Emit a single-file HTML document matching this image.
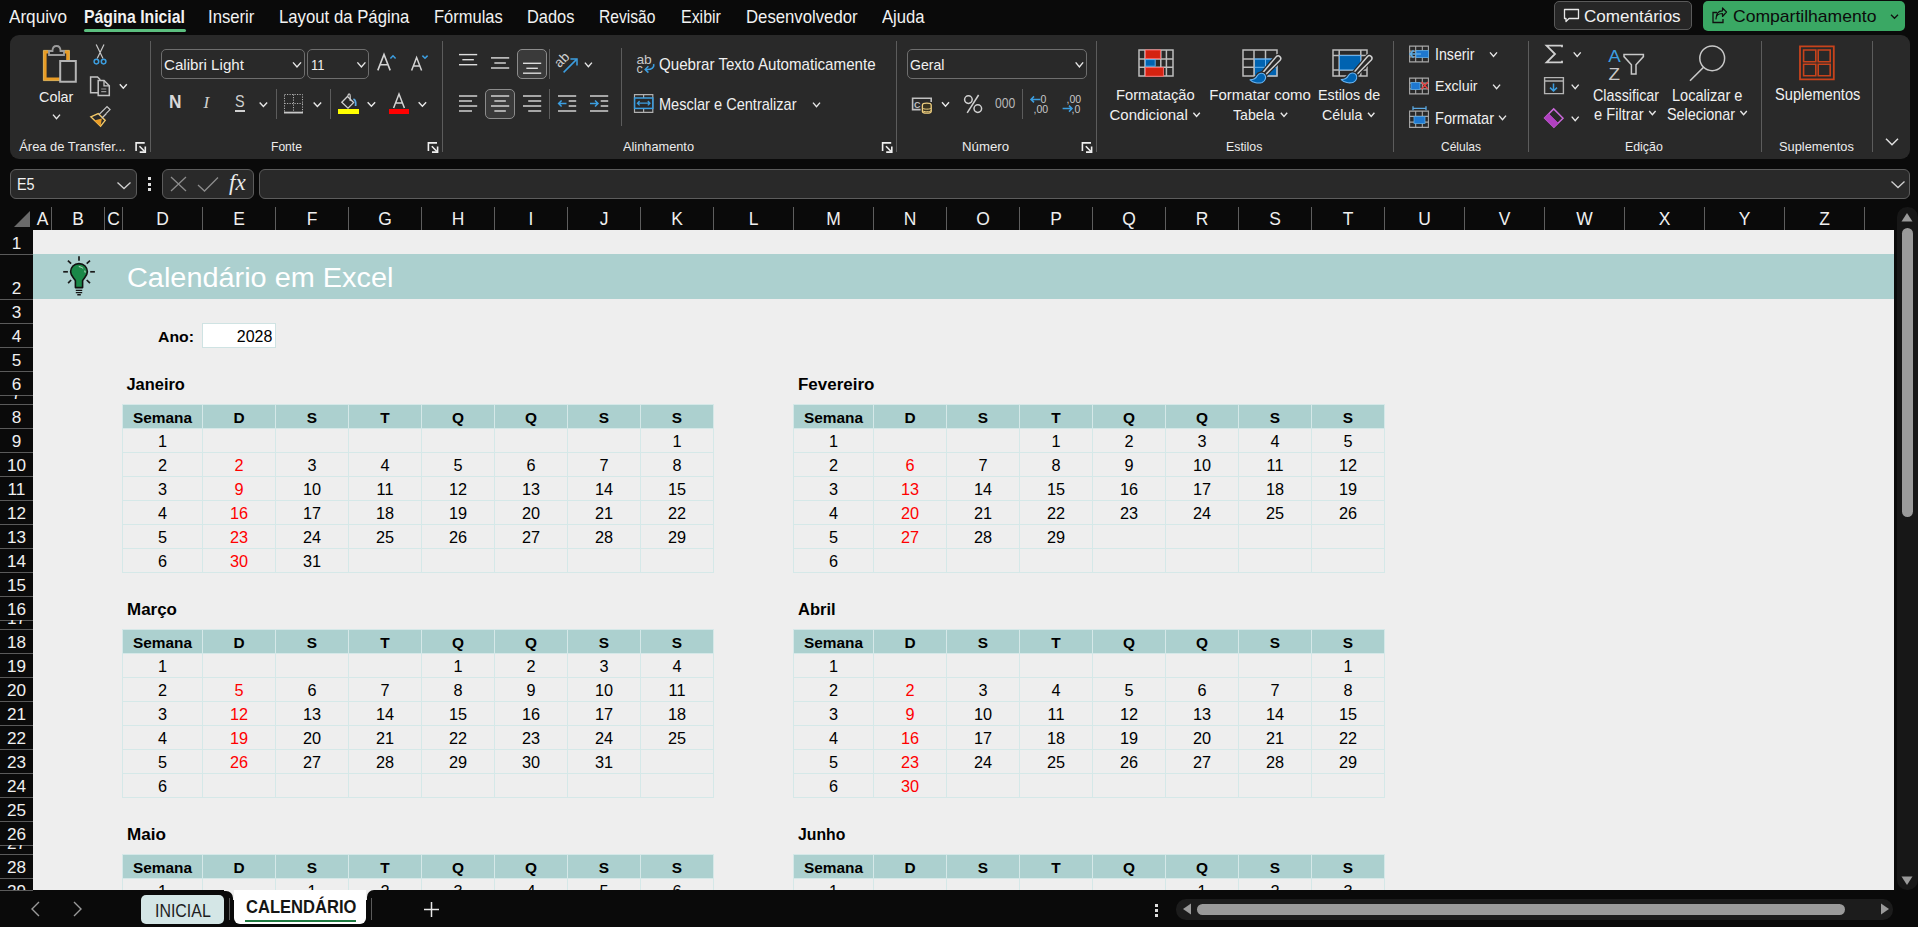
<!DOCTYPE html>
<html><head><meta charset="utf-8"><style>
html,body{margin:0;padding:0;}
body{width:1918px;height:927px;overflow:hidden;background:#0a0a0a;position:relative;font-family:"Liberation Sans",sans-serif;}
body>div{position:absolute;}
.t{position:absolute;white-space:nowrap;line-height:1;}
</style></head><body>
<div style="left:33px;top:230px;width:1861px;height:660px;background:#eeeeee;"></div>
<div class="t" style="left:9.40px;top:7.72px;font-size:18.17px;color:#f2f2f2;transform:scaleX(0.9431);transform-origin:0 0;">Arquivo</div>
<div class="t" style="left:83.80px;top:7.72px;font-size:18.17px;color:#f2f2f2;font-weight:bold;transform:scaleX(0.8698);transform-origin:0 0;">Página Inicial</div>
<div class="t" style="left:208.30px;top:7.72px;font-size:18.17px;color:#f2f2f2;transform:scaleX(0.9192);transform-origin:0 0;">Inserir</div>
<div class="t" style="left:279.00px;top:7.72px;font-size:18.17px;color:#f2f2f2;transform:scaleX(0.9220);transform-origin:0 0;">Layout da Página</div>
<div class="t" style="left:434.20px;top:7.72px;font-size:18.17px;color:#f2f2f2;transform:scaleX(0.9086);transform-origin:0 0;">Fórmulas</div>
<div class="t" style="left:527.20px;top:7.72px;font-size:18.17px;color:#f2f2f2;transform:scaleX(0.9044);transform-origin:0 0;">Dados</div>
<div class="t" style="left:599.30px;top:7.72px;font-size:18.17px;color:#f2f2f2;transform:scaleX(0.8607);transform-origin:0 0;">Revisão</div>
<div class="t" style="left:680.50px;top:7.72px;font-size:18.17px;color:#f2f2f2;transform:scaleX(0.8782);transform-origin:0 0;">Exibir</div>
<div class="t" style="left:746.20px;top:7.72px;font-size:18.17px;color:#f2f2f2;transform:scaleX(0.9216);transform-origin:0 0;">Desenvolvedor</div>
<div class="t" style="left:882.40px;top:7.72px;font-size:18.17px;color:#f2f2f2;transform:scaleX(0.9167);transform-origin:0 0;">Ajuda</div>
<div style="left:84px;top:29px;width:102px;height:3px;background:#5cbf7f;border-radius:2px;"></div>
<div style="left:1554px;top:1px;width:138px;height:29px;background:#262626;border:1px solid #5a5a5a;border-radius:5px;box-sizing:border-box;"></div>
<svg style="position:absolute;left:1563px;top:8px;" width="17" height="15" viewBox="0 0 17 15"><path d="M1.5 1.5 H15.5 V10.5 H6 L3 13.5 V10.5 H1.5 Z" fill="none" stroke="#e8e8e8" stroke-width="1.3" stroke-linejoin="round"/></svg>
<div class="t" style="left:1584.30px;top:7.68px;font-size:17.15px;color:#f2f2f2;transform:scaleX(0.9945);transform-origin:0 0;">Comentários</div>
<div style="left:1703px;top:1px;width:202px;height:30px;background:#3aa864;border-radius:5px;"></div>
<svg style="position:absolute;left:1711px;top:7px;" width="17" height="17" viewBox="0 0 17 17"><path d="M6 5.5 H2 V15.5 H12 V12" fill="none" stroke="#101010" stroke-width="1.3"/><path d="M5 12 C5 8 8 6.5 11.5 6.5 V9.5 L15.5 5 L11.5 1 V3.8 C7 3.8 5 7 5 12Z" fill="none" stroke="#101010" stroke-width="1.2" stroke-linejoin="round"/></svg>
<div class="t" style="left:1733.10px;top:7.68px;font-size:17.15px;color:#0c0c0c;transform:scaleX(1.0240);transform-origin:0 0;">Compartilhamento</div>
<svg style="position:absolute;left:1888.5px;top:13.0px;" width="11.0" height="7.0" viewBox="0 0 11.0 7.0"><path d="M2 1.75 L5.5 5.25 L9.0 1.75" fill="none" stroke="#101010" stroke-width="1.3"/></svg>
<div style="left:10px;top:35px;width:1900px;height:124px;background:#292929;border-radius:9px;"></div>
<div class="t" style="left:19.20px;top:141.05px;font-size:12.94px;color:#ececec;">Área de Transfer...</div>
<div class="t" style="left:270.50px;top:141.05px;font-size:12.94px;color:#ececec;transform:scaleX(0.9341);transform-origin:0 0;">Fonte</div>
<div class="t" style="left:623.20px;top:141.05px;font-size:12.94px;color:#ececec;transform:scaleX(0.9873);transform-origin:0 0;">Alinhamento</div>
<div class="t" style="left:962.40px;top:141.05px;font-size:12.94px;color:#ececec;transform:scaleX(1.0215);transform-origin:0 0;">Número</div>
<div class="t" style="left:1226.30px;top:141.05px;font-size:12.94px;color:#ececec;transform:scaleX(0.9553);transform-origin:0 0;">Estilos</div>
<div class="t" style="left:1440.60px;top:141.05px;font-size:12.94px;color:#ececec;transform:scaleX(0.9272);transform-origin:0 0;">Células</div>
<div class="t" style="left:1625.40px;top:141.05px;font-size:12.94px;color:#ececec;transform:scaleX(0.9556);transform-origin:0 0;">Edição</div>
<div class="t" style="left:1779.00px;top:141.05px;font-size:12.94px;color:#ececec;transform:scaleX(0.9906);transform-origin:0 0;">Suplementos</div>
<div class="t" style="left:39.00px;top:89.95px;font-size:14.83px;color:#f0f0f0;transform:scaleX(0.9709);transform-origin:0 0;">Colar</div>
<div style="left:161px;top:49px;width:144px;height:30px;background:transparent;border:1px solid #6e6e6e;border-radius:5px;box-sizing:border-box;"></div>
<div class="t" style="left:164.00px;top:56.88px;font-size:15.26px;color:#f0f0f0;transform:scaleX(0.9927);transform-origin:0 0;">Calibri Light</div>
<div style="left:307px;top:49px;width:62px;height:30px;background:transparent;border:1px solid #6e6e6e;border-radius:5px;box-sizing:border-box;"></div>
<div class="t" style="left:311.00px;top:56.88px;font-size:15.26px;color:#f0f0f0;transform:scaleX(0.8458);transform-origin:0 0;">11</div>
<div class="t" style="left:168.80px;top:94.23px;font-size:17.44px;color:#d8d8d8;font-weight:bold;transform:scaleX(0.9924);transform-origin:0 0;">N</div>
<div class="t" style="left:203.5px;top:94px;font-family:'Liberation Serif',serif;font-style:italic;font-size:17px;color:#d0d0d0;">I</div>
<div class="t" style="left:235.00px;top:94.37px;font-size:16.57px;color:#d0d0d0;transform:scaleX(0.8686);transform-origin:0 0;">S</div>
<div style="left:234.5px;top:110px;width:10.5px;height:1.6px;background:#d0d0d0;"></div>
<div style="left:338px;top:109px;width:20.5px;height:5px;background:#ffff00;"></div>
<div style="left:389px;top:109px;width:20.2px;height:5px;background:#ff0000;"></div>
<div style="left:517px;top:49px;width:30px;height:30px;background:#3a3a3a;border:1px solid #8c8c8c;border-radius:5px;box-sizing:border-box;"></div>
<div style="left:485px;top:89px;width:30px;height:30px;background:#3a3a3a;border:1px solid #8c8c8c;border-radius:5px;box-sizing:border-box;"></div>
<div class="t" style="left:659.10px;top:56.71px;font-size:15.70px;color:#f0f0f0;transform:scaleX(0.9638);transform-origin:0 0;">Quebrar Texto Automaticamente</div>
<div class="t" style="left:659.40px;top:96.91px;font-size:15.70px;color:#f0f0f0;transform:scaleX(0.9278);transform-origin:0 0;">Mesclar e Centralizar</div>
<div style="left:907px;top:49px;width:180px;height:30px;background:transparent;border:1px solid #6e6e6e;border-radius:5px;box-sizing:border-box;"></div>
<div class="t" style="left:910.20px;top:56.95px;font-size:15.41px;color:#f0f0f0;transform:scaleX(0.9130);transform-origin:0 0;">Geral</div>
<div class="t" style="left:994.50px;top:96.19px;font-size:14.53px;color:#b8b8b8;transform:scaleX(0.8371);transform-origin:0 0;">000</div>
<div class="t" style="left:1116.30px;top:88.12px;font-size:14.97px;color:#f0f0f0;transform:scaleX(0.9852);transform-origin:0 0;">Formatação</div>
<div class="t" style="left:1109.50px;top:107.92px;font-size:14.97px;color:#f0f0f0;">Condicional</div>
<div class="t" style="left:1209.30px;top:88.12px;font-size:14.97px;color:#f0f0f0;">Formatar como</div>
<div class="t" style="left:1232.60px;top:107.92px;font-size:14.97px;color:#f0f0f0;transform:scaleX(0.9452);transform-origin:0 0;">Tabela</div>
<div class="t" style="left:1318.40px;top:88.12px;font-size:14.97px;color:#f0f0f0;transform:scaleX(0.9568);transform-origin:0 0;">Estilos de</div>
<div class="t" style="left:1321.90px;top:107.92px;font-size:14.97px;color:#f0f0f0;transform:scaleX(0.9518);transform-origin:0 0;">Célula</div>
<div class="t" style="left:1434.50px;top:46.71px;font-size:15.70px;color:#f0f0f0;transform:scaleX(0.9034);transform-origin:0 0;">Inserir</div>
<div class="t" style="left:1434.50px;top:79.15px;font-size:14.83px;color:#f0f0f0;transform:scaleX(0.9554);transform-origin:0 0;">Excluir</div>
<div class="t" style="left:1434.50px;top:110.71px;font-size:15.70px;color:#f0f0f0;transform:scaleX(0.9282);transform-origin:0 0;">Formatar</div>
<div class="t" style="left:1593.10px;top:87.81px;font-size:15.70px;color:#f0f0f0;transform:scaleX(0.9130);transform-origin:0 0;">Classificar</div>
<div class="t" style="left:1594.00px;top:107.31px;font-size:15.70px;color:#f0f0f0;transform:scaleX(0.9323);transform-origin:0 0;">e Filtrar</div>
<div class="t" style="left:1672.20px;top:87.81px;font-size:15.70px;color:#f0f0f0;transform:scaleX(0.9287);transform-origin:0 0;">Localizar e</div>
<div class="t" style="left:1666.60px;top:107.31px;font-size:15.70px;color:#f0f0f0;transform:scaleX(0.9181);transform-origin:0 0;">Selecionar</div>
<div class="t" style="left:1774.60px;top:87.21px;font-size:15.70px;color:#f0f0f0;transform:scaleX(0.9320);transform-origin:0 0;">Suplementos</div>
<svg style="position:absolute;left:0;top:0;" width="1918" height="160" viewBox="0 0 1918 160"><rect x="150" y="41" width="1" height="111" fill="#5c5c5c"/><rect x="442" y="41" width="1" height="111" fill="#5c5c5c"/><rect x="896" y="41" width="1" height="111" fill="#5c5c5c"/><rect x="1096" y="41" width="1" height="111" fill="#5c5c5c"/><rect x="1393" y="41" width="1" height="111" fill="#5c5c5c"/><rect x="1528" y="41" width="1" height="111" fill="#5c5c5c"/><rect x="1761" y="41" width="1" height="111" fill="#5c5c5c"/><rect x="1872" y="41" width="1" height="111" fill="#5c5c5c"/><path d="M144.7 142.9 H136.1 V151.0" fill="none" stroke="#f0f0f0" stroke-width="1.6" /><path d="M139.5 146.3 L144.7 151.5" fill="none" stroke="#f0f0f0" stroke-width="1.6" /><path d="M145.3 146.5 V152.10000000000002 H139.7" fill="none" stroke="#f0f0f0" stroke-width="1.6" /><path d="M437.0 142.9 H428.40000000000003 V151.0" fill="none" stroke="#f0f0f0" stroke-width="1.6" /><path d="M431.8 146.3 L437.0 151.5" fill="none" stroke="#f0f0f0" stroke-width="1.6" /><path d="M437.6 146.5 V152.10000000000002 H432.0" fill="none" stroke="#f0f0f0" stroke-width="1.6" /><path d="M891.2 142.9 H882.6 V151.0" fill="none" stroke="#f0f0f0" stroke-width="1.6" /><path d="M886 146.3 L891.2 151.5" fill="none" stroke="#f0f0f0" stroke-width="1.6" /><path d="M891.8 146.5 V152.10000000000002 H886.2" fill="none" stroke="#f0f0f0" stroke-width="1.6" /><path d="M1091.0 142.9 H1082.3999999999999 V151.0" fill="none" stroke="#f0f0f0" stroke-width="1.6" /><path d="M1085.8 146.3 L1091.0 151.5" fill="none" stroke="#f0f0f0" stroke-width="1.6" /><path d="M1091.6 146.5 V152.10000000000002 H1086.0" fill="none" stroke="#f0f0f0" stroke-width="1.6" /><path d="M45 52 H67.8 V79 H45 Z" fill="none" stroke="#e99c25" stroke-width="3.2" /><path d="M43.4 50.4 H69.4 V80.6 H43.4 Z" fill="none" stroke="#f3c566" stroke-width="0.8" /><path d="M49 55 V51 H52.5 C52.5 47.5 54 46 56.5 46 C59 46 60.5 47.5 60.5 51 H64 V55 Z" fill="#292929" stroke="#9c9c9c" stroke-width="1.8" /><path d="M60.2 61 H75.8 V81.8 H60.2 Z" fill="#292929" stroke="#b4b4b4" stroke-width="2" /><path d="M53.0 114.6 L56.5 118.6 L60.0 114.6" fill="none" stroke="#e8e8e8" stroke-width="1.4" /><path d="M96.2 44.4 L103 58.6 M104 44.4 L97.2 58.6" fill="none" stroke="#c8c8c8" stroke-width="1.2" /><circle cx="96.4" cy="61.6" r="2.3" fill="none" stroke="#3c9ee0" stroke-width="1.5"/><circle cx="103.6" cy="61.6" r="2.3" fill="none" stroke="#3c9ee0" stroke-width="1.5"/><path d="M90.6 77 H97.5 L99.8 79.3 V92.8 H90.6 Z" fill="#292929" stroke="#c4c4c4" stroke-width="1.5" /><path d="M98.2 80.5 H104 L109.3 85.8 V95.4 H98.2 Z" fill="#292929" stroke="#c4c4c4" stroke-width="1.5" /><path d="M104 80.5 V85.8 H109.3" fill="none" stroke="#c4c4c4" stroke-width="1.3" /><path d="M101.2 89 H106.3 M101.2 91.6 H106.3" fill="none" stroke="#9a9a9a" stroke-width="1.1" /><path d="M119.8 84.3 L123.3 88.3 L126.8 84.3" fill="none" stroke="#e8e8e8" stroke-width="1.4" /><path d="M90.8 116.8 L98.2 113.6 L105.2 120.4 L100.6 126.2 Z" fill="#292929" stroke="#f2c766" stroke-width="1.4" /><path d="M94.2 120.6 L101.8 118.6 L100.6 126.2 Z" fill="#e99c25" stroke="none" stroke-width="0" /><path d="M99 114.6 L103.2 110.4 M102 118 L106.2 113.8" fill="none" stroke="#c8c8c8" stroke-width="1.3" /><path d="M103 110.6 L107 106.6 L110 109.6 L106 113.6" fill="none" stroke="#c8c8c8" stroke-width="1.3" /><path d="M293.0 62.349999999999994 L297 66.85 L301.0 62.349999999999994" fill="none" stroke="#e8e8e8" stroke-width="1.4" /><path d="M357.4 62.349999999999994 L361.4 66.85 L365.4 62.349999999999994" fill="none" stroke="#e8e8e8" stroke-width="1.4" /><path d="M377.8 70.4 L384 54.4 L390.2 70.4 M380 64.8 H388" fill="none" stroke="#d4d4d4" stroke-width="1.6" /><path d="M390.4 58.6 L393 55.8 L395.6 58.6" fill="none" stroke="#3c9ee0" stroke-width="1.5" /><path d="M411.6 70.4 L416.6 57.6 L421.6 70.4 M413.4 66 H419.8" fill="none" stroke="#d4d4d4" stroke-width="1.5" /><path d="M422.4 55.6 L425 58.2 L427.6 55.6" fill="none" stroke="#3c9ee0" stroke-width="1.5" /><path d="M259.65 102.5 L263.4 106.5 L267.15 102.5" fill="none" stroke="#e8e8e8" stroke-width="1.4" /><rect x="276" y="89" width="1" height="30" fill="#5c5c5c"/><path d="M284.5 94.5 H302.5 V112.5 H284.5 Z M293.5 94.5 V112.5 M284.5 103.5 H302.5" fill="none" stroke="#b0b0b0" stroke-width="1" stroke-dasharray="1.2 1.3"/><path d="M284 112.6 H303" fill="none" stroke="#c8c8c8" stroke-width="1.8" /><path d="M313.65 102.5 L317.4 106.5 L321.15 102.5" fill="none" stroke="#e8e8e8" stroke-width="1.4" /><rect x="330" y="89" width="1" height="30" fill="#5c5c5c"/><path d="M341.8 102.2 L347.5 96.5 L353.6 102.6 L348 108.2 Z" fill="none" stroke="#d0d0d0" stroke-width="1.3" /><path d="M348 96 C348 93.2 350.2 93.2 350.2 96 V101" fill="none" stroke="#d0d0d0" stroke-width="1.2" /><path d="M353.4 99 C355.6 100 356 103 355.6 106" fill="none" stroke="#5ba8e0" stroke-width="1.8" /><path d="M367.65 102.2 L371.4 106.2 L375.15 102.2" fill="none" stroke="#e8e8e8" stroke-width="1.4" /><path d="M393.6 108 L399 94 L404.4 108 M395.6 103 H402.4" fill="none" stroke="#d4d4d4" stroke-width="1.5" /><path d="M418.65 102.2 L422.4 106.2 L426.15 102.2" fill="none" stroke="#e8e8e8" stroke-width="1.4" /><rect x="459.0" y="53.9" width="18.2" height="1.4" fill="#dcdcdc"/><rect x="462.35" y="59.0" width="11.5" height="1.4" fill="#dcdcdc"/><rect x="459.0" y="64.0" width="18.2" height="1.4" fill="#dcdcdc"/><rect x="491.0" y="57.199999999999996" width="18.2" height="1.4" fill="#dcdcdc"/><rect x="494.35" y="62.3" width="11.5" height="1.4" fill="#dcdcdc"/><rect x="491.0" y="67.3" width="18.2" height="1.4" fill="#dcdcdc"/><rect x="523.0" y="62.599999999999994" width="18.2" height="1.4" fill="#dcdcdc"/><rect x="526.35" y="67.6" width="11.5" height="1.4" fill="#dcdcdc"/><rect x="523.0" y="72.5" width="18.2" height="1.4" fill="#dcdcdc"/><rect x="549" y="49" width="1" height="30" fill="#5c5c5c"/><text x="0" y="0" transform="translate(559.6 68.2) rotate(-45)" font-family="Liberation Sans" font-size="13.5" fill="#d0d0d0">ab</text><path d="M563.6 72.4 L576.6 59.4" fill="none" stroke="#3c9ee0" stroke-width="1.5" /><path d="M570.4 59 H577 V65.6" fill="none" stroke="#3c9ee0" stroke-width="1.5" /><path d="M584.9 62.599999999999994 L588.4 66.6 L591.9 62.599999999999994" fill="none" stroke="#e8e8e8" stroke-width="1.4" /><rect x="621" y="48" width="1" height="78" fill="#5c5c5c"/><rect x="459" y="95.3" width="18.2" height="1.4" fill="#dcdcdc"/><rect x="459" y="100.3" width="13" height="1.4" fill="#dcdcdc"/><rect x="459" y="105.3" width="18.2" height="1.4" fill="#dcdcdc"/><rect x="459" y="110.3" width="13" height="1.4" fill="#dcdcdc"/><rect x="491.0" y="95.3" width="18.2" height="1.4" fill="#dcdcdc"/><rect x="494.35" y="100.3" width="11.5" height="1.4" fill="#dcdcdc"/><rect x="491.0" y="105.3" width="18.2" height="1.4" fill="#dcdcdc"/><rect x="494.35" y="110.3" width="11.5" height="1.4" fill="#dcdcdc"/><rect x="523.0" y="95.3" width="18.2" height="1.4" fill="#dcdcdc"/><rect x="528.2" y="100.3" width="13" height="1.4" fill="#dcdcdc"/><rect x="523.0" y="105.3" width="18.2" height="1.4" fill="#dcdcdc"/><rect x="528.2" y="110.3" width="13" height="1.4" fill="#dcdcdc"/><rect x="549" y="89" width="1" height="30" fill="#5c5c5c"/><rect x="558" y="95.3" width="18.2" height="1.4" fill="#dcdcdc"/><rect x="558" y="110.3" width="18.2" height="1.4" fill="#dcdcdc"/><rect x="568.7" y="100.3" width="7.5" height="1.4" fill="#dcdcdc"/><rect x="568.7" y="105.3" width="7.5" height="1.4" fill="#dcdcdc"/><path d="M558.6 103.5 H566.5 M561.6 100.4 L558.6 103.5 L561.6 106.6" fill="none" stroke="#3c9ee0" stroke-width="1.5" /><rect x="590" y="95.3" width="18.2" height="1.4" fill="#dcdcdc"/><rect x="590" y="110.3" width="18.2" height="1.4" fill="#dcdcdc"/><rect x="600.7" y="100.3" width="7.5" height="1.4" fill="#dcdcdc"/><rect x="600.7" y="105.3" width="7.5" height="1.4" fill="#dcdcdc"/><path d="M590 103.5 H598 M595 100.4 L598 103.5 L595 106.6" fill="none" stroke="#3c9ee0" stroke-width="1.5" /><text x="636.4" y="63.8" font-family="Liberation Sans" font-size="12.6" fill="#c8c8c8" textLength="15.4" lengthAdjust="spacingAndGlyphs">ab</text><text x="636.4" y="72.6" font-family="Liberation Sans" font-size="12.6" fill="#c8c8c8">c</text><path d="M653.6 64 C654.6 67.6 651.4 69.4 647.4 69.4 H645.2" fill="none" stroke="#3c9ee0" stroke-width="1.5" /><path d="M648.4 66.2 L645.2 69.4 L648.4 72.6" fill="none" stroke="#3c9ee0" stroke-width="1.5" /><path d="M634.5 94.6 H652.8 V112.3 H634.5 Z M643.6 94.6 V112.3" fill="none" stroke="#b0b0b0" stroke-width="1.2" /><rect x="634.6" y="98" width="18.2" height="10.4" fill="#292929" stroke="#3c9ee0" stroke-width="1.5"/><path d="M637.4 103.2 H650 M639.6 101 L637.4 103.2 L639.6 105.4 M647.8 101 L650 103.2 L647.8 105.4" fill="none" stroke="#3c9ee0" stroke-width="1.3" /><path d="M813.0 102.6 L816.5 106.6 L820.0 102.6" fill="none" stroke="#e8e8e8" stroke-width="1.4" /><path d="M1075.65 62.349999999999994 L1079.4 66.85 L1083.15 62.349999999999994" fill="none" stroke="#e8e8e8" stroke-width="1.4" /><path d="M912.6 98.2 H931.2 V109.6 H912.6 Z" fill="none" stroke="#c0c0c0" stroke-width="1.6" /><text x="914" y="108" font-family="Liberation Sans" font-weight="bold" font-size="9.5" fill="#c0c0c0" textLength="13" lengthAdjust="spacingAndGlyphs">CC</text><rect x="920.6" y="102" width="12" height="12.5" fill="#292929"/><path d="M922.4 105 C922.4 102.6 931.2 102.6 931.2 105 V111.4 C931.2 113.8 922.4 113.8 922.4 111.4 Z" fill="#3a3420" stroke="#f0d080" stroke-width="1.3" /><path d="M922.4 107.8 C922.4 109.6 931.2 109.6 931.2 107.8 M922.4 110.4 C922.4 112.2 931.2 112.2 931.2 110.4" fill="none" stroke="#f0d080" stroke-width="1" /><path d="M942.0 102.3 L945.5 106.3 L949.0 102.3" fill="none" stroke="#e8e8e8" stroke-width="1.4" /><circle cx="968.4" cy="99.6" r="3.8" fill="none" stroke="#d0d0d0" stroke-width="1.5"/><circle cx="977.8" cy="108.6" r="3.8" fill="none" stroke="#d0d0d0" stroke-width="1.5"/><path d="M978.6 95 L967.2 112.8" fill="none" stroke="#d0d0d0" stroke-width="1.5" /><rect x="1022" y="89" width="1" height="30" fill="#5c5c5c"/><path d="M1031 99.4 H1040.5 M1034 96.4 L1031 99.4 L1034 102.4" fill="none" stroke="#3c9ee0" stroke-width="1.5" /><text x="1040.5" y="103" font-family="Liberation Sans" font-size="10.5" fill="#c8c8c8">0</text><text x="1033.5" y="113" font-family="Liberation Sans" font-size="10.5" fill="#c8c8c8">,00</text><text x="1066.5" y="103" font-family="Liberation Sans" font-size="10.5" fill="#c8c8c8">,00</text><path d="M1062.6 108.6 H1072 M1069 105.6 L1072 108.6 L1069 111.6" fill="none" stroke="#3c9ee0" stroke-width="1.5" /><text x="1071.5" y="113" font-family="Liberation Sans" font-size="10.5" fill="#c8c8c8">,0</text><path d="M1139 50 H1173 V76 H1139 Z M1145 50 V76 M1160.8 50 V76 M1166.4 50 V76 M1139 59 H1173 M1139 67.2 H1173" fill="none" stroke="#bcbcbc" stroke-width="1.5" /><rect x="1145.4" y="50" width="15" height="8.6" fill="#d42210" stroke="#ff6a6a" stroke-width="0.9"/><rect x="1145.4" y="59.6" width="9.8" height="6.6" fill="#0063b1" stroke="#6ab4f0" stroke-width="0.9"/><rect x="1145.4" y="67.6" width="18" height="8.6" fill="#d42210" stroke="#ff6a6a" stroke-width="0.9"/><path d="M1193.3999999999999 112.8 L1196.6 116.39999999999999 L1199.8 112.8" fill="none" stroke="#e8e8e8" stroke-width="1.4" /><rect x="1254.4" y="59" width="22.6" height="17" fill="#0063b1" stroke="#6ab4f0" stroke-width="0.9"/><path d="M1243 50 H1277 V76 H1243 Z M1254 50 V59 M1265.5 50 V59 M1243 59 H1254 M1243 67.3 H1254 M1254 59 V76" fill="none" stroke="#bcbcbc" stroke-width="1.5" /><path d="M1265.5 59 V76 M1254 67.3 H1277 M1254 59 H1277" fill="none" stroke="#6ab4f0" stroke-width="1" /><path d="M1263.38 76.88 L1280.11 60.16 A2.6 2.6 0 0 0 1276.29 56.64 L1261.02 74.72 Z" fill="#292929" stroke="#292929" stroke-width="4" stroke-linejoin="round"/><path d="M1263.38 76.88 L1280.11 60.16 A2.6 2.6 0 0 0 1276.29 56.64 L1261.02 74.72 Z" fill="#292929" stroke="#cfcfcf" stroke-width="1.5" stroke-linejoin="round"/><path d="M1250.0 79.80000000000001 C1253.6 79.80000000000001 1256.0 78.4 1257.1999999999998 75.80000000000001 C1258.6 72.80000000000001 1263.0 72.4 1264.8 74.80000000000001 C1266.3999999999999 77.0 1265.6 81.0 1262.1999999999998 82.4 C1258.1999999999998 83.80000000000001 1253.0 82.80000000000001 1250.0 79.80000000000001 Z" fill="#292929" stroke="#292929" stroke-width="3.5" stroke-linejoin="round"/><path d="M1250.0 79.80000000000001 C1253.6 79.80000000000001 1256.0 78.4 1257.1999999999998 75.80000000000001 C1258.6 72.80000000000001 1263.0 72.4 1264.8 74.80000000000001 C1266.3999999999999 77.0 1265.6 81.0 1262.1999999999998 82.4 C1258.1999999999998 83.80000000000001 1253.0 82.80000000000001 1250.0 79.80000000000001 Z" fill="#0063b1" stroke="#6ab4f0" stroke-width="1.1" stroke-linejoin="round"/><path d="M1280.8 112.8 L1284 116.39999999999999 L1287.2 112.8" fill="none" stroke="#e8e8e8" stroke-width="1.4" /><path d="M1333 50 H1367 V76 H1333 Z M1339.2 50 V76 M1360.8 50 V76 M1333 55.6 H1367 M1333 69.9 H1367" fill="none" stroke="#bcbcbc" stroke-width="1.5" /><rect x="1339.4" y="55.6" width="21.2" height="14.3" fill="#0063b1" stroke="#6ab4f0" stroke-width="0.9"/><path d="M1354.58 76.68 L1371.31 59.96 A2.6 2.6 0 0 0 1367.49 56.44 L1352.22 74.52 Z" fill="#292929" stroke="#292929" stroke-width="4" stroke-linejoin="round"/><path d="M1354.58 76.68 L1371.31 59.96 A2.6 2.6 0 0 0 1367.49 56.44 L1352.22 74.52 Z" fill="#292929" stroke="#cfcfcf" stroke-width="1.5" stroke-linejoin="round"/><path d="M1341.2 79.60000000000001 C1344.8 79.60000000000001 1347.2 78.2 1348.3999999999999 75.60000000000001 C1349.8 72.60000000000001 1354.2 72.2 1356.0 74.60000000000001 C1357.6 76.8 1356.8 80.8 1353.3999999999999 82.2 C1349.3999999999999 83.60000000000001 1344.2 82.60000000000001 1341.2 79.60000000000001 Z" fill="#292929" stroke="#292929" stroke-width="3.5" stroke-linejoin="round"/><path d="M1341.2 79.60000000000001 C1344.8 79.60000000000001 1347.2 78.2 1348.3999999999999 75.60000000000001 C1349.8 72.60000000000001 1354.2 72.2 1356.0 74.60000000000001 C1357.6 76.8 1356.8 80.8 1353.3999999999999 82.2 C1349.3999999999999 83.60000000000001 1344.2 82.60000000000001 1341.2 79.60000000000001 Z" fill="#0063b1" stroke="#6ab4f0" stroke-width="1.1" stroke-linejoin="round"/><path d="M1368.0 112.8 L1371.2 116.39999999999999 L1374.4 112.8" fill="none" stroke="#e8e8e8" stroke-width="1.4" /><path d="M1409.6 46.1 H1428.4 V61.9 H1409.6 Z M1415.6666666666667 45.5 V62.5 M1422.3333333333333 45.5 V62.5 M1409 51.166666666666664 H1429 M1409 56.833333333333336 H1429" fill="none" stroke="#a8a8a8" stroke-width="1.1" /><rect x="1416" y="50.5" width="12.5" height="7" fill="#1e78d0" stroke="#5ba8e0" stroke-width="0.8"/><path d="M1410 54 H1421 M1413.6 50.4 L1410 54 L1413.6 57.6" fill="none" stroke="#5ba8e0" stroke-width="1.6" /><path d="M1490.0 52.4 L1493.5 56.4 L1497.0 52.4" fill="none" stroke="#e8e8e8" stroke-width="1.4" /><path d="M1409.6 78.1 H1428.4 V93.9 H1409.6 Z M1415.6666666666667 77.5 V94.5 M1422.3333333333333 77.5 V94.5 M1409 83.16666666666667 H1429 M1409 88.83333333333333 H1429" fill="none" stroke="#a8a8a8" stroke-width="1.1" /><rect x="1411" y="82.5" width="9" height="7" fill="#1e78d0" stroke="#5ba8e0" stroke-width="0.8"/><path d="M1421.5 82 L1428 89 M1428 82 L1421.5 89" fill="none" stroke="#e84040" stroke-width="1.4" /><path d="M1493.1 84.6 L1496.6 88.6 L1500.1 84.6" fill="none" stroke="#e8e8e8" stroke-width="1.4" /><path d="M1409.6 111.1 H1428.4 V127.4 H1409.6 Z M1415.6666666666667 110.5 V128.0 M1422.3333333333333 110.5 V128.0 M1409 116.33333333333333 H1429 M1409 122.16666666666667 H1429" fill="none" stroke="#a8a8a8" stroke-width="1.1" /><rect x="1414" y="116.5" width="11" height="7" fill="#1e78d0" stroke="#5ba8e0" stroke-width="0.8"/><path d="M1413 108.3 H1426 M1413 106.3 V110.3 M1426 106.3 V110.3" fill="none" stroke="#5ba8e0" stroke-width="1.3" /><path d="M1499.0 115.6 L1502.5 119.6 L1506.0 115.6" fill="none" stroke="#e8e8e8" stroke-width="1.4" /><path d="M1562 47.2 V45.6 H1546.6 L1555 54 L1546.6 62.4 H1562 V60.8" fill="none" stroke="#d0d0d0" stroke-width="1.8" /><path d="M1573.7 52.4 L1577.2 56.4 L1580.7 52.4" fill="none" stroke="#e8e8e8" stroke-width="1.4" /><path d="M1544.6 77.6 H1563.4 V93.6 H1544.6 Z M1544.6 81 H1563.4" fill="none" stroke="#b4b4b4" stroke-width="1.4" /><path d="M1553.5 83.5 V91 M1550 87.6 L1553.5 91 L1557 87.6" fill="none" stroke="#3c9ee0" stroke-width="1.5" /><path d="M1571.7 84.6 L1575.2 88.6 L1578.7 84.6" fill="none" stroke="#e8e8e8" stroke-width="1.4" /><path d="M1544.6 118 L1553.7 108.9 L1563 118.2 L1553.9 127.3 Z" fill="#292929" stroke="#c868d8" stroke-width="1.5" /><path d="M1544.6 118 L1548.8 113.8 L1558.1 123.1 L1553.9 127.3 Z" fill="#b040c0" stroke="#b040c0" stroke-width="0.8" /><path d="M1571.7 116.6 L1575.2 120.6 L1578.7 116.6" fill="none" stroke="#e8e8e8" stroke-width="1.4" /><text x="1608.2" y="62" font-family="Liberation Sans" font-size="16.5" fill="#3c9ee0" textLength="12.5" lengthAdjust="spacingAndGlyphs">A</text><text x="1608.6" y="79.5" font-family="Liberation Sans" font-size="16" fill="#c8c8c8" textLength="11.5" lengthAdjust="spacingAndGlyphs">Z</text><path d="M1624 54.6 H1643.4 V56.6 L1636 64.8 V74 H1631.4 V64.8 L1624 56.6 Z" fill="none" stroke="#c8c8c8" stroke-width="1.5" /><path d="M1649.2 111.0 L1652.4 114.6 L1655.6000000000001 111.0" fill="none" stroke="#e8e8e8" stroke-width="1.4" /><circle cx="1712.2" cy="58.3" r="12.4" fill="none" stroke="#c8c8c8" stroke-width="1.5"/><path d="M1703.6 67.2 L1690 80.8" fill="none" stroke="#c8c8c8" stroke-width="1.6" /><path d="M1740.3999999999999 111.0 L1743.6 114.6 L1746.8 111.0" fill="none" stroke="#e8e8e8" stroke-width="1.4" /><path d="M1800 46.4 H1833.8 V79.4 H1800 Z" fill="none" stroke="#c8431c" stroke-width="1.8" /><path d="M1803.6 50 H1815.8 V61.8 H1803.6 Z M1818.2 50 H1830.2 V61.8 H1818.2 Z M1803.6 64.2 H1815.8 V75.8 H1803.6 Z M1818.2 64.2 H1830.2 V75.8 H1818.2 Z" fill="none" stroke="#c8431c" stroke-width="1.6" /><path d="M1886.0 138.8 L1892 144.8 L1898.0 138.8" fill="none" stroke="#e0e0e0" stroke-width="1.5" /></svg>
<div style="left:10px;top:169px;width:127px;height:30px;background:#292929;border:1px solid #5c5c5c;border-radius:6px;box-sizing:border-box;"></div>
<div class="t" style="left:17.00px;top:176.71px;font-size:15.70px;color:#f2f2f2;transform:scaleX(0.9166);transform-origin:0 0;">E5</div>
<svg style="position:absolute;left:116px;top:181px;" width="16" height="9" viewBox="0 0 16 9"><path d="M1.5 1.5 L8 7.5 L14.5 1.5" fill="none" stroke="#d0d0d0" stroke-width="1.3"/></svg>
<div style="left:148px;top:176.7px;width:3px;height:3px;background:#e0e0e0;"></div>
<div style="left:148px;top:182.5px;width:3px;height:3px;background:#e0e0e0;"></div>
<div style="left:148px;top:188.2px;width:3px;height:3px;background:#e0e0e0;"></div>
<div style="left:162px;top:169px;width:92px;height:30px;background:#292929;border:1px solid #5c5c5c;border-radius:6px;box-sizing:border-box;"></div>
<svg style="position:absolute;left:170px;top:176px;" width="17" height="16" viewBox="0 0 17 16"><path d="M1 1 L16 15 M16 1 L1 15" stroke="#8c8c8c" stroke-width="1.3"/></svg>
<svg style="position:absolute;left:197px;top:176px;" width="22" height="16" viewBox="0 0 22 16"><path d="M1 9 L7.5 15 L21 1.5" fill="none" stroke="#8c8c8c" stroke-width="1.3"/></svg>
<div class="t" style="left:229px;top:171px;font-family:'Liberation Serif',serif;font-style:italic;font-size:23px;color:#eaeaea;">fx</div>
<div style="left:259px;top:169px;width:1651px;height:30px;background:#292929;border:1px solid #5c5c5c;border-radius:6px;box-sizing:border-box;"></div>
<svg style="position:absolute;left:1890px;top:180px;" width="16" height="9" viewBox="0 0 16 9"><path d="M1.5 1.5 L8 7.5 L14.5 1.5" fill="none" stroke="#d0d0d0" stroke-width="1.3"/></svg>
<div style="left:51px;top:207px;width:1px;height:23px;background:#5e5e5e;"></div>
<div class="t" style="left:36.68px;top:211.23px;font-size:17.44px;color:#f0f0f0;">A</div>
<div style="left:104px;top:207px;width:1px;height:23px;background:#5e5e5e;"></div>
<div class="t" style="left:72.18px;top:211.23px;font-size:17.44px;color:#f0f0f0;">B</div>
<div style="left:122px;top:207px;width:1px;height:23px;background:#5e5e5e;"></div>
<div class="t" style="left:107.20px;top:211.23px;font-size:17.44px;color:#f0f0f0;">C</div>
<div style="left:202px;top:207px;width:1px;height:23px;background:#5e5e5e;"></div>
<div class="t" style="left:156.20px;top:211.23px;font-size:17.44px;color:#f0f0f0;">D</div>
<div style="left:275px;top:207px;width:1px;height:23px;background:#5e5e5e;"></div>
<div class="t" style="left:233.18px;top:211.23px;font-size:17.44px;color:#f0f0f0;">E</div>
<div style="left:348px;top:207px;width:1px;height:23px;background:#5e5e5e;"></div>
<div class="t" style="left:306.67px;top:211.23px;font-size:17.44px;color:#f0f0f0;">F</div>
<div style="left:421px;top:207px;width:1px;height:23px;background:#5e5e5e;"></div>
<div class="t" style="left:378.22px;top:211.23px;font-size:17.44px;color:#f0f0f0;">G</div>
<div style="left:494px;top:207px;width:1px;height:23px;background:#5e5e5e;"></div>
<div class="t" style="left:451.70px;top:211.23px;font-size:17.44px;color:#f0f0f0;">H</div>
<div style="left:567px;top:207px;width:1px;height:23px;background:#5e5e5e;"></div>
<div class="t" style="left:528.58px;top:211.23px;font-size:17.44px;color:#f0f0f0;">I</div>
<div style="left:640px;top:207px;width:1px;height:23px;background:#5e5e5e;"></div>
<div class="t" style="left:599.64px;top:211.23px;font-size:17.44px;color:#f0f0f0;">J</div>
<div style="left:713px;top:207px;width:1px;height:23px;background:#5e5e5e;"></div>
<div class="t" style="left:671.18px;top:211.23px;font-size:17.44px;color:#f0f0f0;">K</div>
<div style="left:793px;top:207px;width:1px;height:23px;background:#5e5e5e;"></div>
<div class="t" style="left:748.65px;top:211.23px;font-size:17.44px;color:#f0f0f0;">L</div>
<div style="left:873px;top:207px;width:1px;height:23px;background:#5e5e5e;"></div>
<div class="t" style="left:826.24px;top:211.23px;font-size:17.44px;color:#f0f0f0;">M</div>
<div style="left:946px;top:207px;width:1px;height:23px;background:#5e5e5e;"></div>
<div class="t" style="left:903.70px;top:211.23px;font-size:17.44px;color:#f0f0f0;">N</div>
<div style="left:1019px;top:207px;width:1px;height:23px;background:#5e5e5e;"></div>
<div class="t" style="left:976.22px;top:211.23px;font-size:17.44px;color:#f0f0f0;">O</div>
<div style="left:1092px;top:207px;width:1px;height:23px;background:#5e5e5e;"></div>
<div class="t" style="left:1050.18px;top:211.23px;font-size:17.44px;color:#f0f0f0;">P</div>
<div style="left:1165px;top:207px;width:1px;height:23px;background:#5e5e5e;"></div>
<div class="t" style="left:1122.22px;top:211.23px;font-size:17.44px;color:#f0f0f0;">Q</div>
<div style="left:1238px;top:207px;width:1px;height:23px;background:#5e5e5e;"></div>
<div class="t" style="left:1195.70px;top:211.23px;font-size:17.44px;color:#f0f0f0;">R</div>
<div style="left:1311px;top:207px;width:1px;height:23px;background:#5e5e5e;"></div>
<div class="t" style="left:1269.18px;top:211.23px;font-size:17.44px;color:#f0f0f0;">S</div>
<div style="left:1384px;top:207px;width:1px;height:23px;background:#5e5e5e;"></div>
<div class="t" style="left:1342.67px;top:211.23px;font-size:17.44px;color:#f0f0f0;">T</div>
<div style="left:1464px;top:207px;width:1px;height:23px;background:#5e5e5e;"></div>
<div class="t" style="left:1418.20px;top:211.23px;font-size:17.44px;color:#f0f0f0;">U</div>
<div style="left:1544px;top:207px;width:1px;height:23px;background:#5e5e5e;"></div>
<div class="t" style="left:1498.68px;top:211.23px;font-size:17.44px;color:#f0f0f0;">V</div>
<div style="left:1624px;top:207px;width:1px;height:23px;background:#5e5e5e;"></div>
<div class="t" style="left:1576.27px;top:211.23px;font-size:17.44px;color:#f0f0f0;">W</div>
<div style="left:1704px;top:207px;width:1px;height:23px;background:#5e5e5e;"></div>
<div class="t" style="left:1658.68px;top:211.23px;font-size:17.44px;color:#f0f0f0;">X</div>
<div style="left:1784px;top:207px;width:1px;height:23px;background:#5e5e5e;"></div>
<div class="t" style="left:1738.68px;top:211.23px;font-size:17.44px;color:#f0f0f0;">Y</div>
<div style="left:1864px;top:207px;width:1px;height:23px;background:#5e5e5e;"></div>
<div class="t" style="left:1819.17px;top:211.23px;font-size:17.44px;color:#f0f0f0;">Z</div>
<svg style="position:absolute;left:14px;top:211px;" width="17" height="16" viewBox="0 0 17 16"><path d="M16 0 V16 H0 Z" fill="#6a6a6a"/></svg>
<div style="left:0;top:230px;width:33px;height:660px;overflow:hidden;">
<div style="position:absolute;left:0;top:0px;width:33px;height:24px;overflow:hidden;">
<div class="t" style="left:11.73px;top:5.48px;font-size:17.15px;color:#f0f0f0;">1</div>
</div>
<div style="position:absolute;left:0;top:24px;width:33px;height:1px;background:#5a5a5a;"></div>
<div style="position:absolute;left:0;top:24px;width:33px;height:45px;overflow:hidden;">
<div class="t" style="left:11.73px;top:26.48px;font-size:17.15px;color:#f0f0f0;">2</div>
</div>
<div style="position:absolute;left:0;top:69px;width:33px;height:1px;background:#5a5a5a;"></div>
<div style="position:absolute;left:0;top:69px;width:33px;height:24px;overflow:hidden;">
<div class="t" style="left:11.73px;top:5.48px;font-size:17.15px;color:#f0f0f0;">3</div>
</div>
<div style="position:absolute;left:0;top:93px;width:33px;height:1px;background:#5a5a5a;"></div>
<div style="position:absolute;left:0;top:93px;width:33px;height:24px;overflow:hidden;">
<div class="t" style="left:11.73px;top:5.48px;font-size:17.15px;color:#f0f0f0;">4</div>
</div>
<div style="position:absolute;left:0;top:117px;width:33px;height:1px;background:#5a5a5a;"></div>
<div style="position:absolute;left:0;top:117px;width:33px;height:24px;overflow:hidden;">
<div class="t" style="left:11.73px;top:5.48px;font-size:17.15px;color:#f0f0f0;">5</div>
</div>
<div style="position:absolute;left:0;top:141px;width:33px;height:1px;background:#5a5a5a;"></div>
<div style="position:absolute;left:0;top:141px;width:33px;height:24px;overflow:hidden;">
<div class="t" style="left:11.73px;top:5.48px;font-size:17.15px;color:#f0f0f0;">6</div>
</div>
<div style="position:absolute;left:0;top:165px;width:33px;height:1px;background:#5a5a5a;"></div>
<div style="position:absolute;left:0;top:165px;width:33px;height:9px;overflow:hidden;">
<div class="t" style="left:11.73px;top:-9.52px;font-size:17.15px;color:#f0f0f0;">7</div>
</div>
<div style="position:absolute;left:0;top:174px;width:33px;height:1px;background:#5a5a5a;"></div>
<div style="position:absolute;left:0;top:174px;width:33px;height:24px;overflow:hidden;">
<div class="t" style="left:11.73px;top:5.48px;font-size:17.15px;color:#f0f0f0;">8</div>
</div>
<div style="position:absolute;left:0;top:198px;width:33px;height:1px;background:#5a5a5a;"></div>
<div style="position:absolute;left:0;top:198px;width:33px;height:24px;overflow:hidden;">
<div class="t" style="left:11.73px;top:5.48px;font-size:17.15px;color:#f0f0f0;">9</div>
</div>
<div style="position:absolute;left:0;top:222px;width:33px;height:1px;background:#5a5a5a;"></div>
<div style="position:absolute;left:0;top:222px;width:33px;height:24px;overflow:hidden;">
<div class="t" style="left:6.96px;top:5.48px;font-size:17.15px;color:#f0f0f0;">10</div>
</div>
<div style="position:absolute;left:0;top:246px;width:33px;height:1px;background:#5a5a5a;"></div>
<div style="position:absolute;left:0;top:246px;width:33px;height:24px;overflow:hidden;">
<div class="t" style="left:7.60px;top:5.48px;font-size:17.15px;color:#f0f0f0;">11</div>
</div>
<div style="position:absolute;left:0;top:270px;width:33px;height:1px;background:#5a5a5a;"></div>
<div style="position:absolute;left:0;top:270px;width:33px;height:24px;overflow:hidden;">
<div class="t" style="left:6.96px;top:5.48px;font-size:17.15px;color:#f0f0f0;">12</div>
</div>
<div style="position:absolute;left:0;top:294px;width:33px;height:1px;background:#5a5a5a;"></div>
<div style="position:absolute;left:0;top:294px;width:33px;height:24px;overflow:hidden;">
<div class="t" style="left:6.96px;top:5.48px;font-size:17.15px;color:#f0f0f0;">13</div>
</div>
<div style="position:absolute;left:0;top:318px;width:33px;height:1px;background:#5a5a5a;"></div>
<div style="position:absolute;left:0;top:318px;width:33px;height:24px;overflow:hidden;">
<div class="t" style="left:6.96px;top:5.48px;font-size:17.15px;color:#f0f0f0;">14</div>
</div>
<div style="position:absolute;left:0;top:342px;width:33px;height:1px;background:#5a5a5a;"></div>
<div style="position:absolute;left:0;top:342px;width:33px;height:24px;overflow:hidden;">
<div class="t" style="left:6.96px;top:5.48px;font-size:17.15px;color:#f0f0f0;">15</div>
</div>
<div style="position:absolute;left:0;top:366px;width:33px;height:1px;background:#5a5a5a;"></div>
<div style="position:absolute;left:0;top:366px;width:33px;height:24px;overflow:hidden;">
<div class="t" style="left:6.96px;top:5.48px;font-size:17.15px;color:#f0f0f0;">16</div>
</div>
<div style="position:absolute;left:0;top:390px;width:33px;height:1px;background:#5a5a5a;"></div>
<div style="position:absolute;left:0;top:390px;width:33px;height:9px;overflow:hidden;">
<div class="t" style="left:6.96px;top:-9.52px;font-size:17.15px;color:#f0f0f0;">17</div>
</div>
<div style="position:absolute;left:0;top:399px;width:33px;height:1px;background:#5a5a5a;"></div>
<div style="position:absolute;left:0;top:399px;width:33px;height:24px;overflow:hidden;">
<div class="t" style="left:6.96px;top:5.48px;font-size:17.15px;color:#f0f0f0;">18</div>
</div>
<div style="position:absolute;left:0;top:423px;width:33px;height:1px;background:#5a5a5a;"></div>
<div style="position:absolute;left:0;top:423px;width:33px;height:24px;overflow:hidden;">
<div class="t" style="left:6.96px;top:5.48px;font-size:17.15px;color:#f0f0f0;">19</div>
</div>
<div style="position:absolute;left:0;top:447px;width:33px;height:1px;background:#5a5a5a;"></div>
<div style="position:absolute;left:0;top:447px;width:33px;height:24px;overflow:hidden;">
<div class="t" style="left:6.96px;top:5.48px;font-size:17.15px;color:#f0f0f0;">20</div>
</div>
<div style="position:absolute;left:0;top:471px;width:33px;height:1px;background:#5a5a5a;"></div>
<div style="position:absolute;left:0;top:471px;width:33px;height:24px;overflow:hidden;">
<div class="t" style="left:6.96px;top:5.48px;font-size:17.15px;color:#f0f0f0;">21</div>
</div>
<div style="position:absolute;left:0;top:495px;width:33px;height:1px;background:#5a5a5a;"></div>
<div style="position:absolute;left:0;top:495px;width:33px;height:24px;overflow:hidden;">
<div class="t" style="left:6.96px;top:5.48px;font-size:17.15px;color:#f0f0f0;">22</div>
</div>
<div style="position:absolute;left:0;top:519px;width:33px;height:1px;background:#5a5a5a;"></div>
<div style="position:absolute;left:0;top:519px;width:33px;height:24px;overflow:hidden;">
<div class="t" style="left:6.96px;top:5.48px;font-size:17.15px;color:#f0f0f0;">23</div>
</div>
<div style="position:absolute;left:0;top:543px;width:33px;height:1px;background:#5a5a5a;"></div>
<div style="position:absolute;left:0;top:543px;width:33px;height:24px;overflow:hidden;">
<div class="t" style="left:6.96px;top:5.48px;font-size:17.15px;color:#f0f0f0;">24</div>
</div>
<div style="position:absolute;left:0;top:567px;width:33px;height:1px;background:#5a5a5a;"></div>
<div style="position:absolute;left:0;top:567px;width:33px;height:24px;overflow:hidden;">
<div class="t" style="left:6.96px;top:5.48px;font-size:17.15px;color:#f0f0f0;">25</div>
</div>
<div style="position:absolute;left:0;top:591px;width:33px;height:1px;background:#5a5a5a;"></div>
<div style="position:absolute;left:0;top:591px;width:33px;height:24px;overflow:hidden;">
<div class="t" style="left:6.96px;top:5.48px;font-size:17.15px;color:#f0f0f0;">26</div>
</div>
<div style="position:absolute;left:0;top:615px;width:33px;height:1px;background:#5a5a5a;"></div>
<div style="position:absolute;left:0;top:615px;width:33px;height:9px;overflow:hidden;">
<div class="t" style="left:6.96px;top:-9.52px;font-size:17.15px;color:#f0f0f0;">27</div>
</div>
<div style="position:absolute;left:0;top:624px;width:33px;height:1px;background:#5a5a5a;"></div>
<div style="position:absolute;left:0;top:624px;width:33px;height:24px;overflow:hidden;">
<div class="t" style="left:6.96px;top:5.48px;font-size:17.15px;color:#f0f0f0;">28</div>
</div>
<div style="position:absolute;left:0;top:648px;width:33px;height:1px;background:#5a5a5a;"></div>
<div style="position:absolute;left:0;top:648px;width:33px;height:24px;overflow:hidden;">
<div class="t" style="left:6.96px;top:5.48px;font-size:17.15px;color:#f0f0f0;">29</div>
</div>
<div style="position:absolute;left:0;top:672px;width:33px;height:1px;background:#5a5a5a;"></div>
</div>
<div style="left:33px;top:254px;width:1861px;height:45px;background:#acd0cf;"></div>
<div class="t" style="left:126.60px;top:264.22px;font-size:27.62px;color:#ffffff;transform:scaleX(1.0459);transform-origin:0 0;">Calendário em Excel</div>
<svg style="position:absolute;left:55px;top:252px;" width="45" height="46" viewBox="0 0 45 46">
      <g stroke="#1a1a1a" stroke-width="1.7" stroke-linecap="butt">
        <path d="M24 4.2 V8.7"/><path d="M8.2 19.8 H12.9"/><path d="M35.2 19.8 H39.9"/>
        <path d="M12.9 8.7 L16.1 11.7"/><path d="M35 8.7 L31.7 11.7"/>
        <path d="M13.1 31.2 L16.1 28"/><path d="M35 31.2 L31.7 28"/>
      </g>
      <path d="M24 11.6 C19 11.6 15.6 15.4 15.6 19.8 C15.6 23.6 18.6 25.6 20.4 28.6 V35.6 H27.6 V28.6 C29.4 25.6 32.4 23.6 32.4 19.8 C32.4 15.4 29 11.6 24 11.6 Z" fill="#1a8848" stroke="#111" stroke-width="1.6" stroke-linejoin="round"/>
      <path d="M23.8 14.6 C25.6 14.8 27.4 15.6 28.2 16.6 M29.8 18.6 L30.2 20.6" fill="none" stroke="#d8eee0" stroke-width="0.9"/>
      <path d="M20.8 38.4 H27.2 M20.8 40.6 H27.2 M22.3 42.7 H25.8" stroke="#151515" stroke-width="1.4"/>
    </svg>
<div class="t" style="left:157.50px;top:329.40px;font-size:15.12px;color:#000000;font-weight:bold;transform:scaleX(1.0459);transform-origin:0 0;">Ano:</div>
<div style="left:202px;top:323px;width:74px;height:25px;background:#ffffff;border:1px solid #cfe3e3;box-sizing:border-box;"></div>
<div class="t" style="left:236.80px;top:328.66px;font-size:15.99px;color:#000000;">2028</div>
<div class="t" style="left:126.50px;top:376.29px;font-size:16.42px;color:#000000;font-weight:bold;">Janeiro</div>
<div style="left:122px;top:404px;width:592px;height:24px;background:#acd0cf;"></div>
<div style="left:122px;top:404px;width:592px;height:1px;background:#d5e8e8;"></div>
<div class="t" style="left:132.95px;top:410.05px;font-size:15.41px;color:#000000;font-weight:bold;">Semana</div>
<div class="t" style="left:233.44px;top:410.05px;font-size:15.41px;color:#000000;font-weight:bold;">D</div>
<div class="t" style="left:306.86px;top:410.05px;font-size:15.41px;color:#000000;font-weight:bold;">S</div>
<div class="t" style="left:380.29px;top:410.05px;font-size:15.41px;color:#000000;font-weight:bold;">T</div>
<div class="t" style="left:452.01px;top:410.05px;font-size:15.41px;color:#000000;font-weight:bold;">Q</div>
<div class="t" style="left:525.01px;top:410.05px;font-size:15.41px;color:#000000;font-weight:bold;">Q</div>
<div class="t" style="left:598.86px;top:410.05px;font-size:15.41px;color:#000000;font-weight:bold;">S</div>
<div class="t" style="left:671.86px;top:410.05px;font-size:15.41px;color:#000000;font-weight:bold;">S</div>
<div style="left:122px;top:404px;width:1px;height:169px;background:#d5e8e8;"></div>
<div style="left:202px;top:404px;width:1px;height:169px;background:#d5e8e8;"></div>
<div style="left:275px;top:404px;width:1px;height:169px;background:#d5e8e8;"></div>
<div style="left:348px;top:404px;width:1px;height:169px;background:#d5e8e8;"></div>
<div style="left:421px;top:404px;width:1px;height:169px;background:#d5e8e8;"></div>
<div style="left:494px;top:404px;width:1px;height:169px;background:#d5e8e8;"></div>
<div style="left:567px;top:404px;width:1px;height:169px;background:#d5e8e8;"></div>
<div style="left:640px;top:404px;width:1px;height:169px;background:#d5e8e8;"></div>
<div style="left:713px;top:404px;width:1px;height:169px;background:#d5e8e8;"></div>
<div style="left:122px;top:428px;width:592px;height:1px;background:#d5e8e8;"></div>
<div style="left:122px;top:452px;width:592px;height:1px;background:#d5e8e8;"></div>
<div class="t" style="left:157.97px;top:433.22px;font-size:16.28px;color:#000000;">1</div>
<div class="t" style="left:672.47px;top:433.22px;font-size:16.28px;color:#000000;">1</div>
<div style="left:122px;top:452px;width:592px;height:1px;background:#d5e8e8;"></div>
<div style="left:122px;top:476px;width:592px;height:1px;background:#d5e8e8;"></div>
<div class="t" style="left:157.97px;top:457.22px;font-size:16.28px;color:#000000;">2</div>
<div class="t" style="left:234.47px;top:457.22px;font-size:16.28px;color:#ff0000;">2</div>
<div class="t" style="left:307.47px;top:457.22px;font-size:16.28px;color:#000000;">3</div>
<div class="t" style="left:380.47px;top:457.22px;font-size:16.28px;color:#000000;">4</div>
<div class="t" style="left:453.47px;top:457.22px;font-size:16.28px;color:#000000;">5</div>
<div class="t" style="left:526.47px;top:457.22px;font-size:16.28px;color:#000000;">6</div>
<div class="t" style="left:599.47px;top:457.22px;font-size:16.28px;color:#000000;">7</div>
<div class="t" style="left:672.47px;top:457.22px;font-size:16.28px;color:#000000;">8</div>
<div style="left:122px;top:476px;width:592px;height:1px;background:#d5e8e8;"></div>
<div style="left:122px;top:500px;width:592px;height:1px;background:#d5e8e8;"></div>
<div class="t" style="left:157.97px;top:481.22px;font-size:16.28px;color:#000000;">3</div>
<div class="t" style="left:234.47px;top:481.22px;font-size:16.28px;color:#ff0000;">9</div>
<div class="t" style="left:302.95px;top:481.22px;font-size:16.28px;color:#000000;">10</div>
<div class="t" style="left:376.55px;top:481.22px;font-size:16.28px;color:#000000;">11</div>
<div class="t" style="left:448.95px;top:481.22px;font-size:16.28px;color:#000000;">12</div>
<div class="t" style="left:521.95px;top:481.22px;font-size:16.28px;color:#000000;">13</div>
<div class="t" style="left:594.95px;top:481.22px;font-size:16.28px;color:#000000;">14</div>
<div class="t" style="left:667.95px;top:481.22px;font-size:16.28px;color:#000000;">15</div>
<div style="left:122px;top:500px;width:592px;height:1px;background:#d5e8e8;"></div>
<div style="left:122px;top:524px;width:592px;height:1px;background:#d5e8e8;"></div>
<div class="t" style="left:157.97px;top:505.22px;font-size:16.28px;color:#000000;">4</div>
<div class="t" style="left:229.95px;top:505.22px;font-size:16.28px;color:#ff0000;">16</div>
<div class="t" style="left:302.95px;top:505.22px;font-size:16.28px;color:#000000;">17</div>
<div class="t" style="left:375.95px;top:505.22px;font-size:16.28px;color:#000000;">18</div>
<div class="t" style="left:448.95px;top:505.22px;font-size:16.28px;color:#000000;">19</div>
<div class="t" style="left:521.95px;top:505.22px;font-size:16.28px;color:#000000;">20</div>
<div class="t" style="left:594.95px;top:505.22px;font-size:16.28px;color:#000000;">21</div>
<div class="t" style="left:667.95px;top:505.22px;font-size:16.28px;color:#000000;">22</div>
<div style="left:122px;top:524px;width:592px;height:1px;background:#d5e8e8;"></div>
<div style="left:122px;top:548px;width:592px;height:1px;background:#d5e8e8;"></div>
<div class="t" style="left:157.97px;top:529.22px;font-size:16.28px;color:#000000;">5</div>
<div class="t" style="left:229.95px;top:529.22px;font-size:16.28px;color:#ff0000;">23</div>
<div class="t" style="left:302.95px;top:529.22px;font-size:16.28px;color:#000000;">24</div>
<div class="t" style="left:375.95px;top:529.22px;font-size:16.28px;color:#000000;">25</div>
<div class="t" style="left:448.95px;top:529.22px;font-size:16.28px;color:#000000;">26</div>
<div class="t" style="left:521.95px;top:529.22px;font-size:16.28px;color:#000000;">27</div>
<div class="t" style="left:594.95px;top:529.22px;font-size:16.28px;color:#000000;">28</div>
<div class="t" style="left:667.95px;top:529.22px;font-size:16.28px;color:#000000;">29</div>
<div style="left:122px;top:548px;width:592px;height:1px;background:#d5e8e8;"></div>
<div style="left:122px;top:572px;width:592px;height:1px;background:#d5e8e8;"></div>
<div class="t" style="left:157.97px;top:553.22px;font-size:16.28px;color:#000000;">6</div>
<div class="t" style="left:229.95px;top:553.22px;font-size:16.28px;color:#ff0000;">30</div>
<div class="t" style="left:302.95px;top:553.22px;font-size:16.28px;color:#000000;">31</div>
<div class="t" style="left:797.50px;top:376.29px;font-size:16.42px;color:#000000;font-weight:bold;transform:scaleX(1.0345);transform-origin:0 0;">Fevereiro</div>
<div style="left:793px;top:404px;width:592px;height:24px;background:#acd0cf;"></div>
<div style="left:793px;top:404px;width:592px;height:1px;background:#d5e8e8;"></div>
<div class="t" style="left:803.95px;top:410.05px;font-size:15.41px;color:#000000;font-weight:bold;">Semana</div>
<div class="t" style="left:904.44px;top:410.05px;font-size:15.41px;color:#000000;font-weight:bold;">D</div>
<div class="t" style="left:977.86px;top:410.05px;font-size:15.41px;color:#000000;font-weight:bold;">S</div>
<div class="t" style="left:1051.29px;top:410.05px;font-size:15.41px;color:#000000;font-weight:bold;">T</div>
<div class="t" style="left:1123.01px;top:410.05px;font-size:15.41px;color:#000000;font-weight:bold;">Q</div>
<div class="t" style="left:1196.01px;top:410.05px;font-size:15.41px;color:#000000;font-weight:bold;">Q</div>
<div class="t" style="left:1269.86px;top:410.05px;font-size:15.41px;color:#000000;font-weight:bold;">S</div>
<div class="t" style="left:1342.86px;top:410.05px;font-size:15.41px;color:#000000;font-weight:bold;">S</div>
<div style="left:793px;top:404px;width:1px;height:169px;background:#d5e8e8;"></div>
<div style="left:873px;top:404px;width:1px;height:169px;background:#d5e8e8;"></div>
<div style="left:946px;top:404px;width:1px;height:169px;background:#d5e8e8;"></div>
<div style="left:1019px;top:404px;width:1px;height:169px;background:#d5e8e8;"></div>
<div style="left:1092px;top:404px;width:1px;height:169px;background:#d5e8e8;"></div>
<div style="left:1165px;top:404px;width:1px;height:169px;background:#d5e8e8;"></div>
<div style="left:1238px;top:404px;width:1px;height:169px;background:#d5e8e8;"></div>
<div style="left:1311px;top:404px;width:1px;height:169px;background:#d5e8e8;"></div>
<div style="left:1384px;top:404px;width:1px;height:169px;background:#d5e8e8;"></div>
<div style="left:793px;top:428px;width:592px;height:1px;background:#d5e8e8;"></div>
<div style="left:793px;top:452px;width:592px;height:1px;background:#d5e8e8;"></div>
<div class="t" style="left:828.97px;top:433.22px;font-size:16.28px;color:#000000;">1</div>
<div class="t" style="left:1051.47px;top:433.22px;font-size:16.28px;color:#000000;">1</div>
<div class="t" style="left:1124.47px;top:433.22px;font-size:16.28px;color:#000000;">2</div>
<div class="t" style="left:1197.47px;top:433.22px;font-size:16.28px;color:#000000;">3</div>
<div class="t" style="left:1270.47px;top:433.22px;font-size:16.28px;color:#000000;">4</div>
<div class="t" style="left:1343.47px;top:433.22px;font-size:16.28px;color:#000000;">5</div>
<div style="left:793px;top:452px;width:592px;height:1px;background:#d5e8e8;"></div>
<div style="left:793px;top:476px;width:592px;height:1px;background:#d5e8e8;"></div>
<div class="t" style="left:828.97px;top:457.22px;font-size:16.28px;color:#000000;">2</div>
<div class="t" style="left:905.47px;top:457.22px;font-size:16.28px;color:#ff0000;">6</div>
<div class="t" style="left:978.47px;top:457.22px;font-size:16.28px;color:#000000;">7</div>
<div class="t" style="left:1051.47px;top:457.22px;font-size:16.28px;color:#000000;">8</div>
<div class="t" style="left:1124.47px;top:457.22px;font-size:16.28px;color:#000000;">9</div>
<div class="t" style="left:1192.95px;top:457.22px;font-size:16.28px;color:#000000;">10</div>
<div class="t" style="left:1266.55px;top:457.22px;font-size:16.28px;color:#000000;">11</div>
<div class="t" style="left:1338.95px;top:457.22px;font-size:16.28px;color:#000000;">12</div>
<div style="left:793px;top:476px;width:592px;height:1px;background:#d5e8e8;"></div>
<div style="left:793px;top:500px;width:592px;height:1px;background:#d5e8e8;"></div>
<div class="t" style="left:828.97px;top:481.22px;font-size:16.28px;color:#000000;">3</div>
<div class="t" style="left:900.95px;top:481.22px;font-size:16.28px;color:#ff0000;">13</div>
<div class="t" style="left:973.95px;top:481.22px;font-size:16.28px;color:#000000;">14</div>
<div class="t" style="left:1046.95px;top:481.22px;font-size:16.28px;color:#000000;">15</div>
<div class="t" style="left:1119.95px;top:481.22px;font-size:16.28px;color:#000000;">16</div>
<div class="t" style="left:1192.95px;top:481.22px;font-size:16.28px;color:#000000;">17</div>
<div class="t" style="left:1265.95px;top:481.22px;font-size:16.28px;color:#000000;">18</div>
<div class="t" style="left:1338.95px;top:481.22px;font-size:16.28px;color:#000000;">19</div>
<div style="left:793px;top:500px;width:592px;height:1px;background:#d5e8e8;"></div>
<div style="left:793px;top:524px;width:592px;height:1px;background:#d5e8e8;"></div>
<div class="t" style="left:828.97px;top:505.22px;font-size:16.28px;color:#000000;">4</div>
<div class="t" style="left:900.95px;top:505.22px;font-size:16.28px;color:#ff0000;">20</div>
<div class="t" style="left:973.95px;top:505.22px;font-size:16.28px;color:#000000;">21</div>
<div class="t" style="left:1046.95px;top:505.22px;font-size:16.28px;color:#000000;">22</div>
<div class="t" style="left:1119.95px;top:505.22px;font-size:16.28px;color:#000000;">23</div>
<div class="t" style="left:1192.95px;top:505.22px;font-size:16.28px;color:#000000;">24</div>
<div class="t" style="left:1265.95px;top:505.22px;font-size:16.28px;color:#000000;">25</div>
<div class="t" style="left:1338.95px;top:505.22px;font-size:16.28px;color:#000000;">26</div>
<div style="left:793px;top:524px;width:592px;height:1px;background:#d5e8e8;"></div>
<div style="left:793px;top:548px;width:592px;height:1px;background:#d5e8e8;"></div>
<div class="t" style="left:828.97px;top:529.22px;font-size:16.28px;color:#000000;">5</div>
<div class="t" style="left:900.95px;top:529.22px;font-size:16.28px;color:#ff0000;">27</div>
<div class="t" style="left:973.95px;top:529.22px;font-size:16.28px;color:#000000;">28</div>
<div class="t" style="left:1046.95px;top:529.22px;font-size:16.28px;color:#000000;">29</div>
<div style="left:793px;top:548px;width:592px;height:1px;background:#d5e8e8;"></div>
<div style="left:793px;top:572px;width:592px;height:1px;background:#d5e8e8;"></div>
<div class="t" style="left:828.97px;top:553.22px;font-size:16.28px;color:#000000;">6</div>
<div class="t" style="left:126.50px;top:601.29px;font-size:16.42px;color:#000000;font-weight:bold;transform:scaleX(1.0336);transform-origin:0 0;">Março</div>
<div style="left:122px;top:629px;width:592px;height:24px;background:#acd0cf;"></div>
<div style="left:122px;top:629px;width:592px;height:1px;background:#d5e8e8;"></div>
<div class="t" style="left:132.95px;top:635.05px;font-size:15.41px;color:#000000;font-weight:bold;">Semana</div>
<div class="t" style="left:233.44px;top:635.05px;font-size:15.41px;color:#000000;font-weight:bold;">D</div>
<div class="t" style="left:306.86px;top:635.05px;font-size:15.41px;color:#000000;font-weight:bold;">S</div>
<div class="t" style="left:380.29px;top:635.05px;font-size:15.41px;color:#000000;font-weight:bold;">T</div>
<div class="t" style="left:452.01px;top:635.05px;font-size:15.41px;color:#000000;font-weight:bold;">Q</div>
<div class="t" style="left:525.01px;top:635.05px;font-size:15.41px;color:#000000;font-weight:bold;">Q</div>
<div class="t" style="left:598.86px;top:635.05px;font-size:15.41px;color:#000000;font-weight:bold;">S</div>
<div class="t" style="left:671.86px;top:635.05px;font-size:15.41px;color:#000000;font-weight:bold;">S</div>
<div style="left:122px;top:629px;width:1px;height:169px;background:#d5e8e8;"></div>
<div style="left:202px;top:629px;width:1px;height:169px;background:#d5e8e8;"></div>
<div style="left:275px;top:629px;width:1px;height:169px;background:#d5e8e8;"></div>
<div style="left:348px;top:629px;width:1px;height:169px;background:#d5e8e8;"></div>
<div style="left:421px;top:629px;width:1px;height:169px;background:#d5e8e8;"></div>
<div style="left:494px;top:629px;width:1px;height:169px;background:#d5e8e8;"></div>
<div style="left:567px;top:629px;width:1px;height:169px;background:#d5e8e8;"></div>
<div style="left:640px;top:629px;width:1px;height:169px;background:#d5e8e8;"></div>
<div style="left:713px;top:629px;width:1px;height:169px;background:#d5e8e8;"></div>
<div style="left:122px;top:653px;width:592px;height:1px;background:#d5e8e8;"></div>
<div style="left:122px;top:677px;width:592px;height:1px;background:#d5e8e8;"></div>
<div class="t" style="left:157.97px;top:658.22px;font-size:16.28px;color:#000000;">1</div>
<div class="t" style="left:453.47px;top:658.22px;font-size:16.28px;color:#000000;">1</div>
<div class="t" style="left:526.47px;top:658.22px;font-size:16.28px;color:#000000;">2</div>
<div class="t" style="left:599.47px;top:658.22px;font-size:16.28px;color:#000000;">3</div>
<div class="t" style="left:672.47px;top:658.22px;font-size:16.28px;color:#000000;">4</div>
<div style="left:122px;top:677px;width:592px;height:1px;background:#d5e8e8;"></div>
<div style="left:122px;top:701px;width:592px;height:1px;background:#d5e8e8;"></div>
<div class="t" style="left:157.97px;top:682.22px;font-size:16.28px;color:#000000;">2</div>
<div class="t" style="left:234.47px;top:682.22px;font-size:16.28px;color:#ff0000;">5</div>
<div class="t" style="left:307.47px;top:682.22px;font-size:16.28px;color:#000000;">6</div>
<div class="t" style="left:380.47px;top:682.22px;font-size:16.28px;color:#000000;">7</div>
<div class="t" style="left:453.47px;top:682.22px;font-size:16.28px;color:#000000;">8</div>
<div class="t" style="left:526.47px;top:682.22px;font-size:16.28px;color:#000000;">9</div>
<div class="t" style="left:594.95px;top:682.22px;font-size:16.28px;color:#000000;">10</div>
<div class="t" style="left:668.55px;top:682.22px;font-size:16.28px;color:#000000;">11</div>
<div style="left:122px;top:701px;width:592px;height:1px;background:#d5e8e8;"></div>
<div style="left:122px;top:725px;width:592px;height:1px;background:#d5e8e8;"></div>
<div class="t" style="left:157.97px;top:706.22px;font-size:16.28px;color:#000000;">3</div>
<div class="t" style="left:229.95px;top:706.22px;font-size:16.28px;color:#ff0000;">12</div>
<div class="t" style="left:302.95px;top:706.22px;font-size:16.28px;color:#000000;">13</div>
<div class="t" style="left:375.95px;top:706.22px;font-size:16.28px;color:#000000;">14</div>
<div class="t" style="left:448.95px;top:706.22px;font-size:16.28px;color:#000000;">15</div>
<div class="t" style="left:521.95px;top:706.22px;font-size:16.28px;color:#000000;">16</div>
<div class="t" style="left:594.95px;top:706.22px;font-size:16.28px;color:#000000;">17</div>
<div class="t" style="left:667.95px;top:706.22px;font-size:16.28px;color:#000000;">18</div>
<div style="left:122px;top:725px;width:592px;height:1px;background:#d5e8e8;"></div>
<div style="left:122px;top:749px;width:592px;height:1px;background:#d5e8e8;"></div>
<div class="t" style="left:157.97px;top:730.22px;font-size:16.28px;color:#000000;">4</div>
<div class="t" style="left:229.95px;top:730.22px;font-size:16.28px;color:#ff0000;">19</div>
<div class="t" style="left:302.95px;top:730.22px;font-size:16.28px;color:#000000;">20</div>
<div class="t" style="left:375.95px;top:730.22px;font-size:16.28px;color:#000000;">21</div>
<div class="t" style="left:448.95px;top:730.22px;font-size:16.28px;color:#000000;">22</div>
<div class="t" style="left:521.95px;top:730.22px;font-size:16.28px;color:#000000;">23</div>
<div class="t" style="left:594.95px;top:730.22px;font-size:16.28px;color:#000000;">24</div>
<div class="t" style="left:667.95px;top:730.22px;font-size:16.28px;color:#000000;">25</div>
<div style="left:122px;top:749px;width:592px;height:1px;background:#d5e8e8;"></div>
<div style="left:122px;top:773px;width:592px;height:1px;background:#d5e8e8;"></div>
<div class="t" style="left:157.97px;top:754.22px;font-size:16.28px;color:#000000;">5</div>
<div class="t" style="left:229.95px;top:754.22px;font-size:16.28px;color:#ff0000;">26</div>
<div class="t" style="left:302.95px;top:754.22px;font-size:16.28px;color:#000000;">27</div>
<div class="t" style="left:375.95px;top:754.22px;font-size:16.28px;color:#000000;">28</div>
<div class="t" style="left:448.95px;top:754.22px;font-size:16.28px;color:#000000;">29</div>
<div class="t" style="left:521.95px;top:754.22px;font-size:16.28px;color:#000000;">30</div>
<div class="t" style="left:594.95px;top:754.22px;font-size:16.28px;color:#000000;">31</div>
<div style="left:122px;top:773px;width:592px;height:1px;background:#d5e8e8;"></div>
<div style="left:122px;top:797px;width:592px;height:1px;background:#d5e8e8;"></div>
<div class="t" style="left:157.97px;top:778.22px;font-size:16.28px;color:#000000;">6</div>
<div class="t" style="left:797.50px;top:601.29px;font-size:16.42px;color:#000000;font-weight:bold;transform:scaleX(1.0050);transform-origin:0 0;">Abril</div>
<div style="left:793px;top:629px;width:592px;height:24px;background:#acd0cf;"></div>
<div style="left:793px;top:629px;width:592px;height:1px;background:#d5e8e8;"></div>
<div class="t" style="left:803.95px;top:635.05px;font-size:15.41px;color:#000000;font-weight:bold;">Semana</div>
<div class="t" style="left:904.44px;top:635.05px;font-size:15.41px;color:#000000;font-weight:bold;">D</div>
<div class="t" style="left:977.86px;top:635.05px;font-size:15.41px;color:#000000;font-weight:bold;">S</div>
<div class="t" style="left:1051.29px;top:635.05px;font-size:15.41px;color:#000000;font-weight:bold;">T</div>
<div class="t" style="left:1123.01px;top:635.05px;font-size:15.41px;color:#000000;font-weight:bold;">Q</div>
<div class="t" style="left:1196.01px;top:635.05px;font-size:15.41px;color:#000000;font-weight:bold;">Q</div>
<div class="t" style="left:1269.86px;top:635.05px;font-size:15.41px;color:#000000;font-weight:bold;">S</div>
<div class="t" style="left:1342.86px;top:635.05px;font-size:15.41px;color:#000000;font-weight:bold;">S</div>
<div style="left:793px;top:629px;width:1px;height:169px;background:#d5e8e8;"></div>
<div style="left:873px;top:629px;width:1px;height:169px;background:#d5e8e8;"></div>
<div style="left:946px;top:629px;width:1px;height:169px;background:#d5e8e8;"></div>
<div style="left:1019px;top:629px;width:1px;height:169px;background:#d5e8e8;"></div>
<div style="left:1092px;top:629px;width:1px;height:169px;background:#d5e8e8;"></div>
<div style="left:1165px;top:629px;width:1px;height:169px;background:#d5e8e8;"></div>
<div style="left:1238px;top:629px;width:1px;height:169px;background:#d5e8e8;"></div>
<div style="left:1311px;top:629px;width:1px;height:169px;background:#d5e8e8;"></div>
<div style="left:1384px;top:629px;width:1px;height:169px;background:#d5e8e8;"></div>
<div style="left:793px;top:653px;width:592px;height:1px;background:#d5e8e8;"></div>
<div style="left:793px;top:677px;width:592px;height:1px;background:#d5e8e8;"></div>
<div class="t" style="left:828.97px;top:658.22px;font-size:16.28px;color:#000000;">1</div>
<div class="t" style="left:1343.47px;top:658.22px;font-size:16.28px;color:#000000;">1</div>
<div style="left:793px;top:677px;width:592px;height:1px;background:#d5e8e8;"></div>
<div style="left:793px;top:701px;width:592px;height:1px;background:#d5e8e8;"></div>
<div class="t" style="left:828.97px;top:682.22px;font-size:16.28px;color:#000000;">2</div>
<div class="t" style="left:905.47px;top:682.22px;font-size:16.28px;color:#ff0000;">2</div>
<div class="t" style="left:978.47px;top:682.22px;font-size:16.28px;color:#000000;">3</div>
<div class="t" style="left:1051.47px;top:682.22px;font-size:16.28px;color:#000000;">4</div>
<div class="t" style="left:1124.47px;top:682.22px;font-size:16.28px;color:#000000;">5</div>
<div class="t" style="left:1197.47px;top:682.22px;font-size:16.28px;color:#000000;">6</div>
<div class="t" style="left:1270.47px;top:682.22px;font-size:16.28px;color:#000000;">7</div>
<div class="t" style="left:1343.47px;top:682.22px;font-size:16.28px;color:#000000;">8</div>
<div style="left:793px;top:701px;width:592px;height:1px;background:#d5e8e8;"></div>
<div style="left:793px;top:725px;width:592px;height:1px;background:#d5e8e8;"></div>
<div class="t" style="left:828.97px;top:706.22px;font-size:16.28px;color:#000000;">3</div>
<div class="t" style="left:905.47px;top:706.22px;font-size:16.28px;color:#ff0000;">9</div>
<div class="t" style="left:973.95px;top:706.22px;font-size:16.28px;color:#000000;">10</div>
<div class="t" style="left:1047.55px;top:706.22px;font-size:16.28px;color:#000000;">11</div>
<div class="t" style="left:1119.95px;top:706.22px;font-size:16.28px;color:#000000;">12</div>
<div class="t" style="left:1192.95px;top:706.22px;font-size:16.28px;color:#000000;">13</div>
<div class="t" style="left:1265.95px;top:706.22px;font-size:16.28px;color:#000000;">14</div>
<div class="t" style="left:1338.95px;top:706.22px;font-size:16.28px;color:#000000;">15</div>
<div style="left:793px;top:725px;width:592px;height:1px;background:#d5e8e8;"></div>
<div style="left:793px;top:749px;width:592px;height:1px;background:#d5e8e8;"></div>
<div class="t" style="left:828.97px;top:730.22px;font-size:16.28px;color:#000000;">4</div>
<div class="t" style="left:900.95px;top:730.22px;font-size:16.28px;color:#ff0000;">16</div>
<div class="t" style="left:973.95px;top:730.22px;font-size:16.28px;color:#000000;">17</div>
<div class="t" style="left:1046.95px;top:730.22px;font-size:16.28px;color:#000000;">18</div>
<div class="t" style="left:1119.95px;top:730.22px;font-size:16.28px;color:#000000;">19</div>
<div class="t" style="left:1192.95px;top:730.22px;font-size:16.28px;color:#000000;">20</div>
<div class="t" style="left:1265.95px;top:730.22px;font-size:16.28px;color:#000000;">21</div>
<div class="t" style="left:1338.95px;top:730.22px;font-size:16.28px;color:#000000;">22</div>
<div style="left:793px;top:749px;width:592px;height:1px;background:#d5e8e8;"></div>
<div style="left:793px;top:773px;width:592px;height:1px;background:#d5e8e8;"></div>
<div class="t" style="left:828.97px;top:754.22px;font-size:16.28px;color:#000000;">5</div>
<div class="t" style="left:900.95px;top:754.22px;font-size:16.28px;color:#ff0000;">23</div>
<div class="t" style="left:973.95px;top:754.22px;font-size:16.28px;color:#000000;">24</div>
<div class="t" style="left:1046.95px;top:754.22px;font-size:16.28px;color:#000000;">25</div>
<div class="t" style="left:1119.95px;top:754.22px;font-size:16.28px;color:#000000;">26</div>
<div class="t" style="left:1192.95px;top:754.22px;font-size:16.28px;color:#000000;">27</div>
<div class="t" style="left:1265.95px;top:754.22px;font-size:16.28px;color:#000000;">28</div>
<div class="t" style="left:1338.95px;top:754.22px;font-size:16.28px;color:#000000;">29</div>
<div style="left:793px;top:773px;width:592px;height:1px;background:#d5e8e8;"></div>
<div style="left:793px;top:797px;width:592px;height:1px;background:#d5e8e8;"></div>
<div class="t" style="left:828.97px;top:778.22px;font-size:16.28px;color:#000000;">6</div>
<div class="t" style="left:900.95px;top:778.22px;font-size:16.28px;color:#ff0000;">30</div>
<div class="t" style="left:126.50px;top:826.29px;font-size:16.42px;color:#000000;font-weight:bold;transform:scaleX(1.0424);transform-origin:0 0;">Maio</div>
<div style="left:122px;top:854px;width:592px;height:24px;background:#acd0cf;"></div>
<div style="left:122px;top:854px;width:592px;height:1px;background:#d5e8e8;"></div>
<div class="t" style="left:132.95px;top:860.05px;font-size:15.41px;color:#000000;font-weight:bold;">Semana</div>
<div class="t" style="left:233.44px;top:860.05px;font-size:15.41px;color:#000000;font-weight:bold;">D</div>
<div class="t" style="left:306.86px;top:860.05px;font-size:15.41px;color:#000000;font-weight:bold;">S</div>
<div class="t" style="left:380.29px;top:860.05px;font-size:15.41px;color:#000000;font-weight:bold;">T</div>
<div class="t" style="left:452.01px;top:860.05px;font-size:15.41px;color:#000000;font-weight:bold;">Q</div>
<div class="t" style="left:525.01px;top:860.05px;font-size:15.41px;color:#000000;font-weight:bold;">Q</div>
<div class="t" style="left:598.86px;top:860.05px;font-size:15.41px;color:#000000;font-weight:bold;">S</div>
<div class="t" style="left:671.86px;top:860.05px;font-size:15.41px;color:#000000;font-weight:bold;">S</div>
<div style="left:122px;top:854px;width:1px;height:36px;background:#d5e8e8;"></div>
<div style="left:202px;top:854px;width:1px;height:36px;background:#d5e8e8;"></div>
<div style="left:275px;top:854px;width:1px;height:36px;background:#d5e8e8;"></div>
<div style="left:348px;top:854px;width:1px;height:36px;background:#d5e8e8;"></div>
<div style="left:421px;top:854px;width:1px;height:36px;background:#d5e8e8;"></div>
<div style="left:494px;top:854px;width:1px;height:36px;background:#d5e8e8;"></div>
<div style="left:567px;top:854px;width:1px;height:36px;background:#d5e8e8;"></div>
<div style="left:640px;top:854px;width:1px;height:36px;background:#d5e8e8;"></div>
<div style="left:713px;top:854px;width:1px;height:36px;background:#d5e8e8;"></div>
<div style="left:122px;top:878px;width:592px;height:1px;background:#d5e8e8;"></div>
<div class="t" style="left:157.97px;top:883.22px;font-size:16.28px;color:#000000;">1</div>
<div class="t" style="left:307.47px;top:883.22px;font-size:16.28px;color:#000000;">1</div>
<div class="t" style="left:380.47px;top:883.22px;font-size:16.28px;color:#000000;">2</div>
<div class="t" style="left:453.47px;top:883.22px;font-size:16.28px;color:#000000;">3</div>
<div class="t" style="left:526.47px;top:883.22px;font-size:16.28px;color:#000000;">4</div>
<div class="t" style="left:599.47px;top:883.22px;font-size:16.28px;color:#000000;">5</div>
<div class="t" style="left:672.47px;top:883.22px;font-size:16.28px;color:#000000;">6</div>
<div class="t" style="left:797.50px;top:826.29px;font-size:16.42px;color:#000000;font-weight:bold;transform:scaleX(0.9621);transform-origin:0 0;">Junho</div>
<div style="left:793px;top:854px;width:592px;height:24px;background:#acd0cf;"></div>
<div style="left:793px;top:854px;width:592px;height:1px;background:#d5e8e8;"></div>
<div class="t" style="left:803.95px;top:860.05px;font-size:15.41px;color:#000000;font-weight:bold;">Semana</div>
<div class="t" style="left:904.44px;top:860.05px;font-size:15.41px;color:#000000;font-weight:bold;">D</div>
<div class="t" style="left:977.86px;top:860.05px;font-size:15.41px;color:#000000;font-weight:bold;">S</div>
<div class="t" style="left:1051.29px;top:860.05px;font-size:15.41px;color:#000000;font-weight:bold;">T</div>
<div class="t" style="left:1123.01px;top:860.05px;font-size:15.41px;color:#000000;font-weight:bold;">Q</div>
<div class="t" style="left:1196.01px;top:860.05px;font-size:15.41px;color:#000000;font-weight:bold;">Q</div>
<div class="t" style="left:1269.86px;top:860.05px;font-size:15.41px;color:#000000;font-weight:bold;">S</div>
<div class="t" style="left:1342.86px;top:860.05px;font-size:15.41px;color:#000000;font-weight:bold;">S</div>
<div style="left:793px;top:854px;width:1px;height:36px;background:#d5e8e8;"></div>
<div style="left:873px;top:854px;width:1px;height:36px;background:#d5e8e8;"></div>
<div style="left:946px;top:854px;width:1px;height:36px;background:#d5e8e8;"></div>
<div style="left:1019px;top:854px;width:1px;height:36px;background:#d5e8e8;"></div>
<div style="left:1092px;top:854px;width:1px;height:36px;background:#d5e8e8;"></div>
<div style="left:1165px;top:854px;width:1px;height:36px;background:#d5e8e8;"></div>
<div style="left:1238px;top:854px;width:1px;height:36px;background:#d5e8e8;"></div>
<div style="left:1311px;top:854px;width:1px;height:36px;background:#d5e8e8;"></div>
<div style="left:1384px;top:854px;width:1px;height:36px;background:#d5e8e8;"></div>
<div style="left:793px;top:878px;width:592px;height:1px;background:#d5e8e8;"></div>
<div class="t" style="left:828.97px;top:883.22px;font-size:16.28px;color:#000000;">1</div>
<div class="t" style="left:1197.47px;top:883.22px;font-size:16.28px;color:#000000;">1</div>
<div class="t" style="left:1270.47px;top:883.22px;font-size:16.28px;color:#000000;">2</div>
<div class="t" style="left:1343.47px;top:883.22px;font-size:16.28px;color:#000000;">3</div>
<div style="left:224px;top:890px;width:150px;height:10px;background:#eeeeee;"></div>
<div style="left:0px;top:890px;width:33px;height:1px;background:#5a5a5a;"></div>
<div style="left:0px;top:891px;width:233px;height:36px;background:#0a0a0a;border-top-right-radius:7px;"></div>
<div style="left:33px;top:890px;width:190px;height:1px;background:#0a0a0a;"></div>
<div style="left:367px;top:890px;width:1551px;height:37px;background:#0a0a0a;border-top-left-radius:7px;"></div>
<svg style="position:absolute;left:29px;top:900px;" width="14" height="18" viewBox="0 0 14 18"><path d="M10 2 L3 9 L10 16" fill="none" stroke="#9a9a9a" stroke-width="1.4"/></svg>
<svg style="position:absolute;left:70px;top:900px;" width="14" height="18" viewBox="0 0 14 18"><path d="M4 2 L11 9 L4 16" fill="none" stroke="#9a9a9a" stroke-width="1.4"/></svg>
<div style="left:141px;top:895px;width:83px;height:29px;background:#d4e6e6;border-radius:5px;"></div>
<div class="t" style="left:154.60px;top:901.74px;font-size:18.02px;color:#1e1e1e;transform:scaleX(0.8843);transform-origin:0 0;">INICIAL</div>
<div style="left:229px;top:898px;width:1px;height:22px;background:#5a5a5a;"></div>
<div style="left:234px;top:890px;width:132px;height:34px;background:#ffffff;border-radius:0 0 6px 6px;"></div>
<div class="t" style="left:246.20px;top:898.79px;font-size:17.73px;color:#151515;font-weight:bold;transform:scaleX(0.9347);transform-origin:0 0;">CALENDÁRIO</div>
<div style="left:245px;top:920px;width:111px;height:2px;background:#1e7a40;"></div>
<div style="left:371px;top:898px;width:1px;height:22px;background:#5a5a5a;"></div>
<svg style="position:absolute;left:423px;top:901px;" width="17" height="17" viewBox="0 0 17 17"><path d="M8.5 1 V16 M1 8.5 H16" stroke="#e8e8e8" stroke-width="1.5"/></svg>
<div style="left:1154.5px;top:904.0px;width:3px;height:3px;background:#dcdcdc;"></div>
<div style="left:1154.5px;top:908.7px;width:3px;height:3px;background:#dcdcdc;"></div>
<div style="left:1154.5px;top:914.0px;width:3px;height:3px;background:#dcdcdc;"></div>
<div style="left:1176px;top:899px;width:717px;height:21px;background:#1c1c1c;border-radius:10px;"></div>
<svg style="position:absolute;left:1181px;top:902px;" width="12" height="14" viewBox="0 0 12 14"><path d="M10 1.5 V12.5 L2 7 Z" fill="#9a9a9a"/></svg>
<div style="left:1197px;top:904px;width:648px;height:11px;background:#9a9a9a;border-radius:6px;"></div>
<svg style="position:absolute;left:1879px;top:902px;" width="12" height="14" viewBox="0 0 12 14"><path d="M2 1.5 V12.5 L10 7 Z" fill="#9a9a9a"/></svg>
<div style="left:1894px;top:207px;width:24px;height:720px;background:#0a0a0a;"></div>
<div style="left:1897px;top:207px;width:21px;height:683px;background:#171717;border-radius:10px;"></div>
<svg style="position:absolute;left:1900px;top:211px;" width="14" height="12" viewBox="0 0 14 12"><path d="M1.5 10.5 H12.5 L7 2 Z" fill="#9a9a9a"/></svg>
<div style="left:1902px;top:228px;width:11px;height:289px;background:#9a9a9a;border-radius:6px;"></div>
<svg style="position:absolute;left:1900px;top:875px;" width="14" height="12" viewBox="0 0 14 12"><path d="M1.5 1.5 H12.5 L7 10 Z" fill="#9a9a9a"/></svg>
</body></html>
